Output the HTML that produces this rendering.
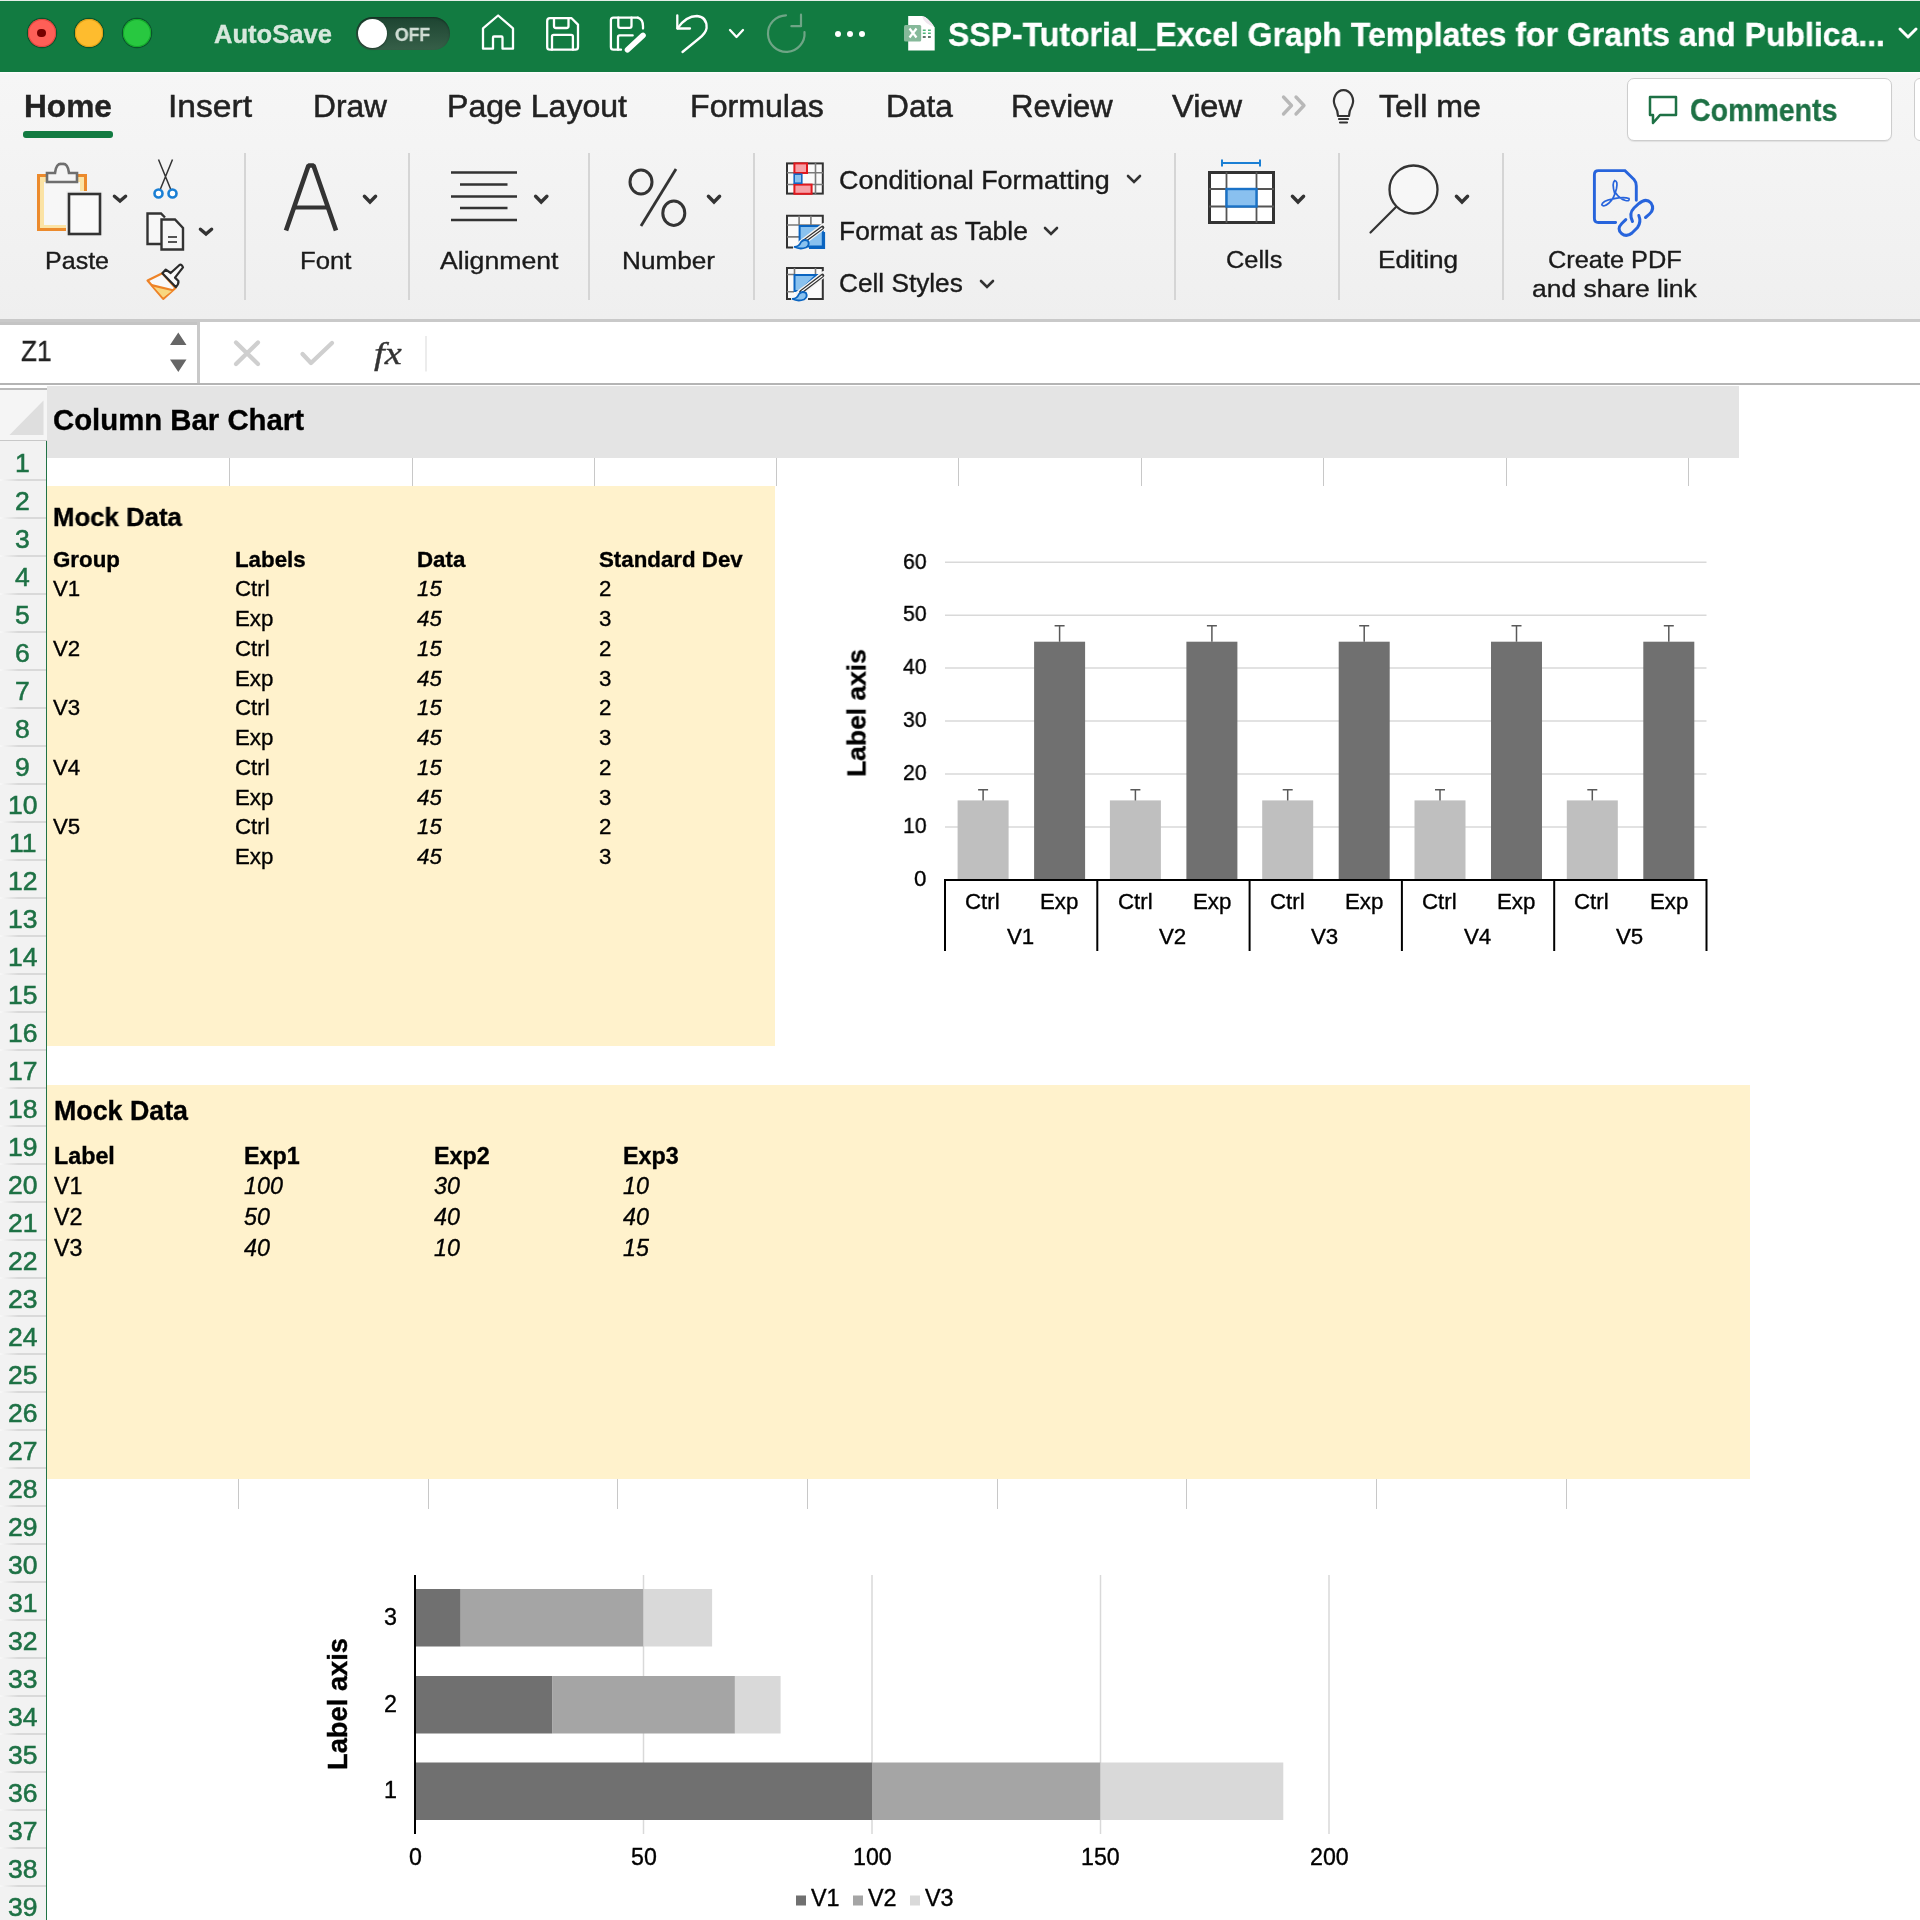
<!DOCTYPE html>
<html><head><meta charset="utf-8"><style>
html,body{margin:0;padding:0;width:1920px;height:1920px;overflow:hidden;background:#fff;}
body{position:relative;font-family:"Liberation Sans",sans-serif;-webkit-font-smoothing:antialiased;}
.t{position:absolute;white-space:nowrap;line-height:normal;transform-origin:0 0;will-change:transform;-webkit-text-stroke:0.35px currentColor;}
.r{position:absolute;}
svg.r{overflow:visible;}
</style></head><body>
<div class="r" style="left:0px;top:0px;width:1920px;height:72px;background:#127b41;"></div>
<div class="r" style="left:0px;top:0px;width:1920px;height:1px;background:#e6eee8;"></div>
<div class="r" style="left:28px;top:19.200000000000003px;width:28px;height:28px;background:#fe5f57;border-radius:50%;box-shadow:inset 0 0 0 1px #e2463f,0 0 0 1.2px rgba(0,40,20,.45);"></div>
<div class="r" style="left:75px;top:19.200000000000003px;width:28px;height:28px;background:#febc2e;border-radius:50%;box-shadow:inset 0 0 0 1px #e1a116,0 0 0 1.2px rgba(0,40,20,.45);"></div>
<div class="r" style="left:123px;top:19.200000000000003px;width:28px;height:28px;background:#28c840;border-radius:50%;box-shadow:inset 0 0 0 1px #14a82b,0 0 0 1.2px rgba(0,40,20,.45);"></div>
<div class="r" style="left:37.2px;top:28.900000000000002px;width:8.6px;height:8.6px;background:#760000;border-radius:50%;"></div>
<div class="t" style="left:214.00px;top:20.38px;font-size:25.00px;font-weight:bold;font-style:normal;color:#d7e8dd;transform:scaleX(1.0228);">AutoSave</div>
<div class="r" style="left:356px;top:17px;width:94px;height:33px;background:linear-gradient(#1d4431,#365f48);border-radius:17px;box-shadow:inset 0 1px 2px rgba(0,0,0,.35);"></div>
<div class="r" style="left:358px;top:19px;width:29px;height:29px;background:#fff;border-radius:50%;box-shadow:0 1px 2px rgba(0,0,0,.4);"></div>
<div class="t" style="left:395.00px;top:24.71px;font-size:18.00px;font-weight:bold;font-style:normal;color:#d0ddd4;transform:scaleX(0.9722);">OFF</div>
<svg class="r" style="left:0;top:0" width="1920" height="71" viewBox="0 0 1920 71" fill="none" stroke="#fff" stroke-width="2.3" stroke-linejoin="round" stroke-linecap="round">
<path d="M498.1 15.5 L483 28.4 V48.7 H493 V37.5 Q493 36.5 494 36.5 H501.5 Q502.5 36.5 502.5 37.5 V48.7 H513 V28.4 Z"/>
<path d="M550 18.2 H571.6 L578 24.6 V47 Q578 49.7 575.3 49.7 H550 Q547.2 49.7 547.2 47 V21 Q547.2 18.2 550 18.2 Z"/>
<path d="M554 18.2 V26 Q554 28 556 28 H566.5 Q568.5 28 568.5 26 V18.2"/><path d="M552 49.7 V36.5 Q552 34.8 553.7 34.8 H571.2 Q572.9 34.8 572.9 36.5 V49.7"/>
<path d="M637.8 17.6 H613.5 Q610.9 17.6 610.9 20.2 V47 Q610.9 49.7 613.5 49.7 H621"/><path d="M637.8 17.6 Q643 19 643 26.2 V28.5"/>
<path d="M618.3 17.6 V26 Q618.3 27.9 620.2 27.9 H629.6 Q631.5 27.9 631.5 26 V17.6"/><path d="M618 49.7 V37 Q618 35.4 619.6 35.4 H632.7"/>
<path d="M643 35.4 L627.5 49.8" stroke-width="5.6"/>
<path d="M677.3 15.3 V28.5 H690"/><path d="M677.5 28.3 Q686 16 697 16 Q707 17 706.6 28 Q706 33 699 38.5 L682.5 52"/>
<path d="M730 30 L736.5 37 L743 30"/>
</svg>
<svg class="r" style="left:0;top:0" width="1920" height="71"><path d="M786 15.3 A18.3 18.3 0 1 0 804.5 32" fill="none" stroke="#6fa586" stroke-width="2.2" stroke-linecap="round"/><path d="M801 14.7 V26.2 H791.4" fill="none" stroke="#6fa586" stroke-width="2.2" stroke-linecap="round" stroke-linejoin="round"/><circle cx="838" cy="34" r="3" fill="#fff"/><circle cx="850" cy="34" r="3" fill="#fff"/><circle cx="862" cy="34" r="3" fill="#fff"/><path d="M908.2 16.1 H922 Q928 17 934.7 27.6 V50.6 H908.2 Z" fill="#fff"/><path d="M922 16.1 Q924 24 934.7 27 V27.6 Q928 17 922 16.1 Z" fill="#efe6ee"/><rect x="904" y="25" width="17.2" height="16.6" rx="1.5" fill="#86b99a"/><path d="M909.5 28.5 L916.5 37.5 M916.5 28.5 L909.5 37.5" stroke="#fff" stroke-width="2.2"/><path d="M922.8 30.2 H925.7 M922.8 33.3 H925.7 M928 30.2 H930.8 M928 33.3 H930.8" stroke="#4fb57a" stroke-width="1.4"/><path d="M922.8 37 H925.7 M928 37 H930.8" stroke="#2d4a3a" stroke-width="1.4"/><path d="M1900 29 L1908 37 L1916 29" fill="none" stroke="#fff" stroke-width="3" stroke-linecap="round" stroke-linejoin="round"/></svg>
<div class="t" style="left:948.00px;top:16.13px;font-size:33.00px;font-weight:bold;font-style:normal;color:#fff;transform:scaleX(0.9689);">SSP-Tutorial_Excel Graph Templates for Grants and Publica...</div>
<div class="r" style="left:0px;top:72px;width:1920px;height:248px;background:linear-gradient(#ffffff,#f6f6f6 2px,#efefef);"></div>
<div class="r" style="left:0px;top:319px;width:1920px;height:3px;background:#c9c9c9;"></div>
<div class="t" style="left:24.00px;top:88.94px;font-size:31.00px;font-weight:bold;font-style:normal;color:#222;transform:scaleX(1.0211);">Home</div>
<div class="r" style="left:23px;top:131px;width:90px;height:7px;background:#127b41;border-radius:3px;"></div>
<div class="t" style="left:168.00px;top:88.94px;font-size:31.00px;font-weight:normal;font-style:normal;color:#222;transform:scaleX(1.0839);-webkit-text-stroke:0.5px #222;">Insert</div>
<div class="t" style="left:313.00px;top:88.94px;font-size:31.00px;font-weight:normal;font-style:normal;color:#222;transform:scaleX(1.0223);-webkit-text-stroke:0.5px #222;">Draw</div>
<div class="t" style="left:447.00px;top:88.94px;font-size:31.00px;font-weight:normal;font-style:normal;color:#222;transform:scaleX(1.0341);-webkit-text-stroke:0.5px #222;">Page Layout</div>
<div class="t" style="left:690.00px;top:88.94px;font-size:31.00px;font-weight:normal;font-style:normal;color:#222;transform:scaleX(1.0366);-webkit-text-stroke:0.5px #222;">Formulas</div>
<div class="t" style="left:886.00px;top:88.94px;font-size:31.00px;font-weight:normal;font-style:normal;color:#222;transform:scaleX(1.0219);-webkit-text-stroke:0.5px #222;">Data</div>
<div class="t" style="left:1011.00px;top:88.94px;font-size:31.00px;font-weight:normal;font-style:normal;color:#222;-webkit-text-stroke:0.5px #222;">Review</div>
<div class="t" style="left:1172.00px;top:88.94px;font-size:31.00px;font-weight:normal;font-style:normal;color:#222;transform:scaleX(1.0503);-webkit-text-stroke:0.5px #222;">View</div>
<div class="t" style="left:1379.00px;top:88.94px;font-size:31.00px;font-weight:normal;font-style:normal;color:#222;transform:scaleX(1.0380);-webkit-text-stroke:0.5px #222;">Tell me</div>
<svg class="r" style="left:0;top:71px" width="1920" height="250" viewBox="0 71 1920 250" fill="none" stroke-linecap="round" stroke-linejoin="round"><path d="M1283.5 97 L1291.5 105.5 L1283.5 114 M1296 97 L1304 105.5 L1296 114" stroke="#b8b8b8" stroke-width="3.3"/><path d="M1335 106 A9.5 11 0 1 1 1352 106 Q1349 111 1349 116 H1338 Q1338 111 1335 106 Z M1339 119 H1348 M1340 122.5 H1347" stroke="#333" stroke-width="2.2"/></svg>
<div class="r" style="left:1627px;top:78px;width:265px;height:63px;background:#fff;border:1.5px solid #cdcdcd;border-radius:7px;box-sizing:border-box;box-shadow:0 1px 1px rgba(0,0,0,.08);"></div>
<svg class="r" style="left:1645px;top:93px" width="36" height="34" fill="none" stroke="#1e7145" stroke-width="2.5" stroke-linejoin="round"><path d="M5 4 H31 V22 H15 L8 30 V22 H5 Z"/></svg>
<div class="t" style="left:1690.00px;top:92.49px;font-size:31.50px;font-weight:bold;font-style:normal;color:#1e7145;transform:scaleX(0.9057);">Comments</div>
<div class="r" style="left:1914px;top:78px;width:12px;height:63px;background:#fff;border:1.5px solid #cdcdcd;border-radius:7px;box-sizing:border-box;"></div>
<div class="r" style="left:244px;top:153px;width:2px;height:147px;background:#d5d5d5;"></div>
<div class="r" style="left:408px;top:153px;width:2px;height:147px;background:#d5d5d5;"></div>
<div class="r" style="left:588px;top:153px;width:2px;height:147px;background:#d5d5d5;"></div>
<div class="r" style="left:753px;top:153px;width:2px;height:147px;background:#d5d5d5;"></div>
<div class="r" style="left:1174px;top:153px;width:2px;height:147px;background:#d5d5d5;"></div>
<div class="r" style="left:1338px;top:153px;width:2px;height:147px;background:#d5d5d5;"></div>
<div class="r" style="left:1502px;top:153px;width:2px;height:147px;background:#d5d5d5;"></div>
<div class="t" style="left:45.40px;top:246.92px;font-size:24.40px;font-weight:normal;font-style:normal;color:#1a1a1a;transform:scaleX(1.0266);">Paste</div>
<div class="t" style="left:299.60px;top:246.92px;font-size:24.40px;font-weight:normal;font-style:normal;color:#1a1a1a;transform:scaleX(1.0533);">Font</div>
<div class="t" style="left:440.00px;top:246.92px;font-size:24.40px;font-weight:normal;font-style:normal;color:#1a1a1a;transform:scaleX(1.0917);">Alignment</div>
<div class="t" style="left:622.40px;top:246.92px;font-size:24.40px;font-weight:normal;font-style:normal;color:#1a1a1a;transform:scaleX(1.0721);">Number</div>
<div class="t" style="left:839.20px;top:166.38px;font-size:25.00px;font-weight:normal;font-style:normal;color:#1a1a1a;transform:scaleX(1.0767);">Conditional Formatting</div>
<div class="t" style="left:839.20px;top:217.38px;font-size:25.00px;font-weight:normal;font-style:normal;color:#1a1a1a;transform:scaleX(1.0562);">Format as Table</div>
<div class="t" style="left:839.20px;top:269.38px;font-size:25.00px;font-weight:normal;font-style:normal;color:#1a1a1a;transform:scaleX(1.0480);">Cell Styles</div>
<div class="t" style="left:1226.00px;top:245.92px;font-size:24.40px;font-weight:normal;font-style:normal;color:#1a1a1a;transform:scaleX(1.0389);">Cells</div>
<div class="t" style="left:1377.70px;top:245.92px;font-size:24.40px;font-weight:normal;font-style:normal;color:#1a1a1a;transform:scaleX(1.0741);">Editing</div>
<div class="t" style="left:1547.50px;top:245.92px;font-size:24.40px;font-weight:normal;font-style:normal;color:#1a1a1a;transform:scaleX(1.0386);">Create PDF</div>
<div class="t" style="left:1531.50px;top:274.62px;font-size:24.40px;font-weight:normal;font-style:normal;color:#1a1a1a;transform:scaleX(1.0854);">and share link</div>
<svg class="r" style="left:0;top:0" width="1920" height="320" viewBox="0 0 1920 320" fill="none" stroke-linejoin="miter">
<!-- paste -->
<rect x="38.5" y="175.5" width="47" height="54" fill="#fbe3a5" stroke="#ec8a2c" stroke-width="3"/>
<rect x="44" y="182" width="36" height="43" fill="#f7f7f7"/>
<path d="M47 173 H55 Q56 163 62 164 Q68 163 69 173 H77 V182 H47 Z" fill="#f4f4f4" stroke="#6e6e6e" stroke-width="2.6"/>
<rect x="67.5" y="192.5" width="34" height="43" fill="#f9f9f9" stroke="#f0f0f0" stroke-width="3"/>
<rect x="69" y="194" width="31" height="40" fill="#f9f9f9" stroke="#333" stroke-width="2.6"/>
<path d="M114.4 196.2 L120.0 201.0 L125.6 196.2" stroke="#333" stroke-width="3.4" stroke-linecap="round"/>
<!-- scissors -->
<path d="M158.5 159.5 L171 190 M172.5 159.5 L160 190" stroke="#333" stroke-width="1.5"/>
<circle cx="158.5" cy="193.5" r="4" fill="#fff" stroke="#1a7fd4" stroke-width="2.6"/>
<circle cx="172.5" cy="193.5" r="4" fill="#fff" stroke="#1a7fd4" stroke-width="2.6"/>
<!-- copy -->
<path d="M161 244 H147.5 V213.5 H161 L165 217.5" stroke="#333" stroke-width="2.4" fill="#f7f7f7"/>
<path d="M161.5 249.5 V219.5 H175 L183 228 V249.5 Z" fill="#f7f7f7" stroke="#333" stroke-width="2.4"/>
<path d="M168 237 H177 M168 242 H177" stroke="#555" stroke-width="1.8"/>
<path d="M200.4 229.2 L206.0 234.0 L211.6 229.2" stroke="#333" stroke-width="3.4" stroke-linecap="round"/>
<!-- format painter -->
<path d="M162.35 273.3 L147.6 280.5 L163.2 298.8 L175.5 288 Z" fill="#f9f9f9" stroke="#ee8327" stroke-width="2.3" stroke-linejoin="round"/>
<path d="M152.5 285.3 L172.5 290.5 L163.2 297.5 Z" fill="#f8d77f"/>
<path d="M151.5 285.1 L173 290.2" stroke="#ee8327" stroke-width="2.2"/>
<path d="M162.35 273.3 L165.8 269.6 L170.7 273 L179.5 265 Q181.5 263.5 183 267.3 L175 277.6 L178.4 281 Q179 284 175.8 287.1 Z" fill="#f9f9f9" stroke="#2b2b2b" stroke-width="2.2" stroke-linejoin="round"/>
<!-- Font A -->
<path d="M286 230.5 L308.5 165.5 H313.5 L336 230.5" stroke="#333" stroke-width="4.6" stroke-linejoin="bevel"/><path d="M294 207.5 H328" stroke="#333" stroke-width="4"/>
<path d="M364.4 196.2 L370.0 202.0 L375.6 196.2" stroke="#333" stroke-width="3.4" stroke-linecap="round"/>
<!-- Alignment -->
<path d="M451 172.5 H517 M460 184.5 H507.5 M451 196.5 H517 M460 208 H507.5 M451 220 H517" stroke="#333" stroke-width="2.6"/>
<path d="M535.6 196.2 L541.2 202.0 L546.9 196.2" stroke="#333" stroke-width="3.4" stroke-linecap="round"/>
<!-- Number % -->
<ellipse cx="641" cy="182" rx="11" ry="12" stroke="#333" stroke-width="3"/>
<ellipse cx="673.8" cy="213.2" rx="11" ry="12.2" stroke="#333" stroke-width="3"/>
<path d="M676 169 L641 226" stroke="#333" stroke-width="2.8"/>
<path d="M708.4 196.2 L714.0 202.0 L719.6 196.2" stroke="#333" stroke-width="3.4" stroke-linecap="round"/>
<!-- Conditional formatting icon -->
<rect x="787" y="163.4" width="35.8" height="30.2" fill="#fafafa" stroke="#333" stroke-width="2"/>
<path d="M787 172.8 H823 M787 184.5 H823 M815.5 163 V194" stroke="#7a7a7a" stroke-width="1.6"/>
<rect x="794.4" y="163.4" width="12.6" height="9.6" fill="#f7a0a6" stroke="#e0191f" stroke-width="2"/>
<rect x="794.4" y="184.6" width="17.2" height="9.2" fill="#f7a0a6" stroke="#e0191f" stroke-width="2"/>
<rect x="794.2" y="174.2" width="7.6" height="9" fill="#8ac2ef" stroke="#1568c4" stroke-width="1.6"/>
<path d="M1128 176 L1134 182 L1140 176" stroke="#333" stroke-width="2.6" stroke-linecap="round"/>
<!-- Format as table icon -->
<path d="M793 247.6 H787 V215.8 H822.8 V228" fill="#fafafa" stroke="#333" stroke-width="2"/>
<path d="M787 225 H799 M787 236.9 H799 M799.1 215.8 V225 M810.9 215.8 V225 M799 225 H823" stroke="#7a7a7a" stroke-width="1.6"/>
<path d="M799.6 226 H822.8 V246.6 H799.6 Z" fill="#8ac2ef" stroke="#0a64c0" stroke-width="2"/>
<path d="M809 247.6 H823.8 V232" stroke="#0a64c0" stroke-width="2.6"/>
<path d="M823.5 226.5 L801 243.5" stroke="#f2f2f2" stroke-width="6.5" stroke-linecap="round"/>
<path d="M822.5 227.5 L803 242" stroke="#333" stroke-width="3.6" stroke-linecap="round"/>
<path d="M822 228 L803.5 241.5" stroke="#fff" stroke-width="1.2" stroke-linecap="round"/>
<path d="M794 246.8 Q799 247 801 242 Q804 238.5 808 241 Q810 245 806 247.5 Q800 249.8 794 246.8 Z" fill="#8ac2ef" stroke="#0a64c0" stroke-width="1.8"/>
<path d="M1045 228 L1051 234 L1057 228" stroke="#333" stroke-width="2.6" stroke-linecap="round"/>
<!-- Cell styles icon -->
<path d="M791 299.1 H787 V268 H822.8 V299.1 H808" fill="#fafafa" stroke="#333" stroke-width="2"/>
<path d="M787 274.5 H794 M787 291.7 H794 M794.5 268 V274 M815.5 268 V274" stroke="#7a7a7a" stroke-width="1.6"/>
<path d="M794.5 275 H816.5 L800 291 H794.5 Z" fill="#8ac2ef" stroke="#0a64c0" stroke-width="2"/>
<path d="M823.5 274.5 L799 293.5" stroke="#f2f2f2" stroke-width="6.5" stroke-linecap="round"/>
<path d="M822.5 275.5 L801 292" stroke="#333" stroke-width="3.6" stroke-linecap="round"/>
<path d="M822 276 L801.5 291.5" stroke="#fff" stroke-width="1.2" stroke-linecap="round"/>
<path d="M792 298.8 Q797 299 799 294 Q802 290.5 806 293 Q808 297 804 299.5 Q798 301.8 792 298.8 Z" fill="#8ac2ef" stroke="#0a64c0" stroke-width="1.8"/>
<path d="M981 281 L987 287 L993 281" stroke="#333" stroke-width="2.6" stroke-linecap="round"/>
<!-- Cells icon -->
<path d="M1222 163 H1260 M1222 159.5 V166.5 M1260 159.5 V166.5" stroke="#1a7fd4" stroke-width="2"/>
<rect x="1209.5" y="172.5" width="64" height="50" fill="#fff" stroke="#333" stroke-width="3"/>
<path d="M1226.5 172 V223 M1256.5 172 V223 M1209 189 H1274 M1209 206.5 H1274" stroke="#555" stroke-width="1.8"/>
<rect x="1226.5" y="189" width="30" height="17.5" fill="#89c0ef" stroke="#1a72c7" stroke-width="2.4"/>
<path d="M1292.4 196.2 L1298.0 202.0 L1303.6 196.2" stroke="#333" stroke-width="3.4" stroke-linecap="round"/>
<!-- Editing magnifier -->
<circle cx="1413.5" cy="189.5" r="24" fill="#f7f7f7" stroke="#333" stroke-width="2.3"/>
<path d="M1396 207 L1370.5 232.5" stroke="#333" stroke-width="2.2" stroke-linecap="round"/>
<path d="M1456.4 196.2 L1462.0 202.0 L1467.6 196.2" stroke="#333" stroke-width="3.4" stroke-linecap="round"/>
<!-- PDF -->
<path d="M1615.6 222.5 H1598.4 Q1594.4 222.5 1594.4 218.5 V174.6 Q1594.4 170.6 1598.4 170.6 H1625 L1634 179.5 Q1636.3 182 1636.3 186 V200.2" stroke="#2764dc" stroke-width="2.9" stroke-linecap="round"/>
<path d="M1614.8 194 Q1611.5 183 1614.8 180.5 Q1618 181 1616.5 188.5 Q1614 199 1609 203 Q1603.5 207.5 1601.8 204.8 Q1602 201 1613 198.8 Q1624 196.8 1629 198.5 Q1630 201.5 1625.5 200.5 Q1619.5 199 1615 192" stroke="#2764dc" stroke-width="1.7"/>
<path d="M1632.5 221.5 Q1628.5 213.5 1634 208 L1639 203.5 Q1646 197.5 1651 203 Q1655 209 1649.5 214 L1645.5 217.5" stroke="#2764dc" stroke-width="3" stroke-linecap="round"/>
<path d="M1625.8 219.6 L1621.8 223.5 Q1616.5 229 1621.5 233.5 Q1626.5 237.5 1632 233 L1637.5 227.5 Q1641.5 222 1638.8 215.5" stroke="#2764dc" stroke-width="3" stroke-linecap="round"/>
</svg>
<div class="r" style="left:0px;top:322px;width:1920px;height:61px;background:#fff;"></div>
<div class="r" style="left:0px;top:322px;width:197px;height:3px;background:#c4c4c4;"></div>
<div class="r" style="left:197px;top:322px;width:3px;height:62px;background:#c9c9c9;"></div>
<div class="r" style="left:0px;top:383px;width:1920px;height:2px;background:#b4b4b4;"></div>
<div class="t" style="left:21.00px;top:334.75px;font-size:29.00px;font-weight:normal;font-style:normal;color:#222;transform:scaleX(0.9028);">Z1</div>
<svg class="r" style="left:0;top:322px" width="460" height="62" viewBox="0 322 460 62"><path d="M170 345 L178.3 332.5 L186.5 345 Z M170 359.5 L178.3 372 L186.5 359.5 Z" fill="#666"/><path d="M236 342.5 L258 364 M258 342.5 L236 364" stroke="#cfcfcf" stroke-width="4.3" stroke-linecap="round"/><path d="M302.5 354 L311 363 L332 343" fill="none" stroke="#cfcfcf" stroke-width="4.3" stroke-linecap="round" stroke-linejoin="round"/><path d="M426 336 V371.5" stroke="#e6e6e6" stroke-width="1.5"/></svg>
<div class="t" style="left:374.00px;top:335.04px;font-size:32.00px;font-weight:normal;font-style:italic;color:#333;transform:scaleX(1.1960);font-family:'Liberation Serif',serif;">fx</div>
<div class="r" style="left:0px;top:385px;width:1920px;height:1535px;background:#fff;"></div>
<div class="r" style="left:0px;top:388px;width:47px;height:1.5px;background:#b9b9b9;"></div>
<div class="r" style="left:0px;top:389.5px;width:47px;height:51px;background:#f5f5f5;"></div>
<svg class="r" style="left:0;top:388px" width="47" height="53"><path d="M9.5 47 L43.5 12.5 V47 Z" fill="#dedede"/></svg>
<div class="r" style="left:0px;top:440px;width:47px;height:1.5px;background:#c8c8c8;"></div>
<div class="r" style="left:0px;top:441px;width:46px;height:1479px;background:#f2f2f2;"></div>
<div class="r" style="left:0px;top:479px;width:46px;height:1.6px;background:linear-gradient(90deg,#f8f8f8,#d9d9d9 40%,#d9d9d9);"></div>
<div class="t" style="left:15.15px;top:447.52px;font-size:26.50px;font-weight:normal;font-style:normal;color:#1e7145;-webkit-text-stroke:0.55px #1e7145;">1</div>
<div class="r" style="left:0px;top:517px;width:46px;height:1.6px;background:linear-gradient(90deg,#f8f8f8,#d9d9d9 40%,#d9d9d9);"></div>
<div class="t" style="left:15.15px;top:485.52px;font-size:26.50px;font-weight:normal;font-style:normal;color:#1e7145;-webkit-text-stroke:0.55px #1e7145;">2</div>
<div class="r" style="left:0px;top:555px;width:46px;height:1.6px;background:linear-gradient(90deg,#f8f8f8,#d9d9d9 40%,#d9d9d9);"></div>
<div class="t" style="left:15.15px;top:523.52px;font-size:26.50px;font-weight:normal;font-style:normal;color:#1e7145;-webkit-text-stroke:0.55px #1e7145;">3</div>
<div class="r" style="left:0px;top:593px;width:46px;height:1.6px;background:linear-gradient(90deg,#f8f8f8,#d9d9d9 40%,#d9d9d9);"></div>
<div class="t" style="left:15.15px;top:561.52px;font-size:26.50px;font-weight:normal;font-style:normal;color:#1e7145;-webkit-text-stroke:0.55px #1e7145;">4</div>
<div class="r" style="left:0px;top:631px;width:46px;height:1.6px;background:linear-gradient(90deg,#f8f8f8,#d9d9d9 40%,#d9d9d9);"></div>
<div class="t" style="left:15.15px;top:599.52px;font-size:26.50px;font-weight:normal;font-style:normal;color:#1e7145;-webkit-text-stroke:0.55px #1e7145;">5</div>
<div class="r" style="left:0px;top:669px;width:46px;height:1.6px;background:linear-gradient(90deg,#f8f8f8,#d9d9d9 40%,#d9d9d9);"></div>
<div class="t" style="left:15.15px;top:637.52px;font-size:26.50px;font-weight:normal;font-style:normal;color:#1e7145;-webkit-text-stroke:0.55px #1e7145;">6</div>
<div class="r" style="left:0px;top:707px;width:46px;height:1.6px;background:linear-gradient(90deg,#f8f8f8,#d9d9d9 40%,#d9d9d9);"></div>
<div class="t" style="left:15.15px;top:675.52px;font-size:26.50px;font-weight:normal;font-style:normal;color:#1e7145;-webkit-text-stroke:0.55px #1e7145;">7</div>
<div class="r" style="left:0px;top:745px;width:46px;height:1.6px;background:linear-gradient(90deg,#f8f8f8,#d9d9d9 40%,#d9d9d9);"></div>
<div class="t" style="left:15.15px;top:713.52px;font-size:26.50px;font-weight:normal;font-style:normal;color:#1e7145;-webkit-text-stroke:0.55px #1e7145;">8</div>
<div class="r" style="left:0px;top:783px;width:46px;height:1.6px;background:linear-gradient(90deg,#f8f8f8,#d9d9d9 40%,#d9d9d9);"></div>
<div class="t" style="left:15.15px;top:751.52px;font-size:26.50px;font-weight:normal;font-style:normal;color:#1e7145;-webkit-text-stroke:0.55px #1e7145;">9</div>
<div class="r" style="left:0px;top:821px;width:46px;height:1.6px;background:linear-gradient(90deg,#f8f8f8,#d9d9d9 40%,#d9d9d9);"></div>
<div class="t" style="left:7.79px;top:789.52px;font-size:26.50px;font-weight:normal;font-style:normal;color:#1e7145;-webkit-text-stroke:0.55px #1e7145;">10</div>
<div class="r" style="left:0px;top:859px;width:46px;height:1.6px;background:linear-gradient(90deg,#f8f8f8,#d9d9d9 40%,#d9d9d9);"></div>
<div class="t" style="left:8.72px;top:827.52px;font-size:26.50px;font-weight:normal;font-style:normal;color:#1e7145;-webkit-text-stroke:0.55px #1e7145;">11</div>
<div class="r" style="left:0px;top:897px;width:46px;height:1.6px;background:linear-gradient(90deg,#f8f8f8,#d9d9d9 40%,#d9d9d9);"></div>
<div class="t" style="left:7.79px;top:865.52px;font-size:26.50px;font-weight:normal;font-style:normal;color:#1e7145;-webkit-text-stroke:0.55px #1e7145;">12</div>
<div class="r" style="left:0px;top:935px;width:46px;height:1.6px;background:linear-gradient(90deg,#f8f8f8,#d9d9d9 40%,#d9d9d9);"></div>
<div class="t" style="left:7.79px;top:903.52px;font-size:26.50px;font-weight:normal;font-style:normal;color:#1e7145;-webkit-text-stroke:0.55px #1e7145;">13</div>
<div class="r" style="left:0px;top:973px;width:46px;height:1.6px;background:linear-gradient(90deg,#f8f8f8,#d9d9d9 40%,#d9d9d9);"></div>
<div class="t" style="left:7.79px;top:941.52px;font-size:26.50px;font-weight:normal;font-style:normal;color:#1e7145;-webkit-text-stroke:0.55px #1e7145;">14</div>
<div class="r" style="left:0px;top:1011px;width:46px;height:1.6px;background:linear-gradient(90deg,#f8f8f8,#d9d9d9 40%,#d9d9d9);"></div>
<div class="t" style="left:7.79px;top:979.52px;font-size:26.50px;font-weight:normal;font-style:normal;color:#1e7145;-webkit-text-stroke:0.55px #1e7145;">15</div>
<div class="r" style="left:0px;top:1049px;width:46px;height:1.6px;background:linear-gradient(90deg,#f8f8f8,#d9d9d9 40%,#d9d9d9);"></div>
<div class="t" style="left:7.79px;top:1017.52px;font-size:26.50px;font-weight:normal;font-style:normal;color:#1e7145;-webkit-text-stroke:0.55px #1e7145;">16</div>
<div class="r" style="left:0px;top:1087px;width:46px;height:1.6px;background:linear-gradient(90deg,#f8f8f8,#d9d9d9 40%,#d9d9d9);"></div>
<div class="t" style="left:7.79px;top:1055.52px;font-size:26.50px;font-weight:normal;font-style:normal;color:#1e7145;-webkit-text-stroke:0.55px #1e7145;">17</div>
<div class="r" style="left:0px;top:1125px;width:46px;height:1.6px;background:linear-gradient(90deg,#f8f8f8,#d9d9d9 40%,#d9d9d9);"></div>
<div class="t" style="left:7.79px;top:1093.52px;font-size:26.50px;font-weight:normal;font-style:normal;color:#1e7145;-webkit-text-stroke:0.55px #1e7145;">18</div>
<div class="r" style="left:0px;top:1163px;width:46px;height:1.6px;background:linear-gradient(90deg,#f8f8f8,#d9d9d9 40%,#d9d9d9);"></div>
<div class="t" style="left:7.79px;top:1131.52px;font-size:26.50px;font-weight:normal;font-style:normal;color:#1e7145;-webkit-text-stroke:0.55px #1e7145;">19</div>
<div class="r" style="left:0px;top:1201px;width:46px;height:1.6px;background:linear-gradient(90deg,#f8f8f8,#d9d9d9 40%,#d9d9d9);"></div>
<div class="t" style="left:7.79px;top:1169.52px;font-size:26.50px;font-weight:normal;font-style:normal;color:#1e7145;-webkit-text-stroke:0.55px #1e7145;">20</div>
<div class="r" style="left:0px;top:1239px;width:46px;height:1.6px;background:linear-gradient(90deg,#f8f8f8,#d9d9d9 40%,#d9d9d9);"></div>
<div class="t" style="left:7.79px;top:1207.52px;font-size:26.50px;font-weight:normal;font-style:normal;color:#1e7145;-webkit-text-stroke:0.55px #1e7145;">21</div>
<div class="r" style="left:0px;top:1277px;width:46px;height:1.6px;background:linear-gradient(90deg,#f8f8f8,#d9d9d9 40%,#d9d9d9);"></div>
<div class="t" style="left:7.79px;top:1245.52px;font-size:26.50px;font-weight:normal;font-style:normal;color:#1e7145;-webkit-text-stroke:0.55px #1e7145;">22</div>
<div class="r" style="left:0px;top:1315px;width:46px;height:1.6px;background:linear-gradient(90deg,#f8f8f8,#d9d9d9 40%,#d9d9d9);"></div>
<div class="t" style="left:7.79px;top:1283.52px;font-size:26.50px;font-weight:normal;font-style:normal;color:#1e7145;-webkit-text-stroke:0.55px #1e7145;">23</div>
<div class="r" style="left:0px;top:1353px;width:46px;height:1.6px;background:linear-gradient(90deg,#f8f8f8,#d9d9d9 40%,#d9d9d9);"></div>
<div class="t" style="left:7.79px;top:1321.52px;font-size:26.50px;font-weight:normal;font-style:normal;color:#1e7145;-webkit-text-stroke:0.55px #1e7145;">24</div>
<div class="r" style="left:0px;top:1391px;width:46px;height:1.6px;background:linear-gradient(90deg,#f8f8f8,#d9d9d9 40%,#d9d9d9);"></div>
<div class="t" style="left:7.79px;top:1359.52px;font-size:26.50px;font-weight:normal;font-style:normal;color:#1e7145;-webkit-text-stroke:0.55px #1e7145;">25</div>
<div class="r" style="left:0px;top:1429px;width:46px;height:1.6px;background:linear-gradient(90deg,#f8f8f8,#d9d9d9 40%,#d9d9d9);"></div>
<div class="t" style="left:7.79px;top:1397.52px;font-size:26.50px;font-weight:normal;font-style:normal;color:#1e7145;-webkit-text-stroke:0.55px #1e7145;">26</div>
<div class="r" style="left:0px;top:1467px;width:46px;height:1.6px;background:linear-gradient(90deg,#f8f8f8,#d9d9d9 40%,#d9d9d9);"></div>
<div class="t" style="left:7.79px;top:1435.52px;font-size:26.50px;font-weight:normal;font-style:normal;color:#1e7145;-webkit-text-stroke:0.55px #1e7145;">27</div>
<div class="r" style="left:0px;top:1505px;width:46px;height:1.6px;background:linear-gradient(90deg,#f8f8f8,#d9d9d9 40%,#d9d9d9);"></div>
<div class="t" style="left:7.79px;top:1473.52px;font-size:26.50px;font-weight:normal;font-style:normal;color:#1e7145;-webkit-text-stroke:0.55px #1e7145;">28</div>
<div class="r" style="left:0px;top:1543px;width:46px;height:1.6px;background:linear-gradient(90deg,#f8f8f8,#d9d9d9 40%,#d9d9d9);"></div>
<div class="t" style="left:7.79px;top:1511.52px;font-size:26.50px;font-weight:normal;font-style:normal;color:#1e7145;-webkit-text-stroke:0.55px #1e7145;">29</div>
<div class="r" style="left:0px;top:1581px;width:46px;height:1.6px;background:linear-gradient(90deg,#f8f8f8,#d9d9d9 40%,#d9d9d9);"></div>
<div class="t" style="left:7.79px;top:1549.52px;font-size:26.50px;font-weight:normal;font-style:normal;color:#1e7145;-webkit-text-stroke:0.55px #1e7145;">30</div>
<div class="r" style="left:0px;top:1619px;width:46px;height:1.6px;background:linear-gradient(90deg,#f8f8f8,#d9d9d9 40%,#d9d9d9);"></div>
<div class="t" style="left:7.79px;top:1587.52px;font-size:26.50px;font-weight:normal;font-style:normal;color:#1e7145;-webkit-text-stroke:0.55px #1e7145;">31</div>
<div class="r" style="left:0px;top:1657px;width:46px;height:1.6px;background:linear-gradient(90deg,#f8f8f8,#d9d9d9 40%,#d9d9d9);"></div>
<div class="t" style="left:7.79px;top:1625.52px;font-size:26.50px;font-weight:normal;font-style:normal;color:#1e7145;-webkit-text-stroke:0.55px #1e7145;">32</div>
<div class="r" style="left:0px;top:1695px;width:46px;height:1.6px;background:linear-gradient(90deg,#f8f8f8,#d9d9d9 40%,#d9d9d9);"></div>
<div class="t" style="left:7.79px;top:1663.52px;font-size:26.50px;font-weight:normal;font-style:normal;color:#1e7145;-webkit-text-stroke:0.55px #1e7145;">33</div>
<div class="r" style="left:0px;top:1733px;width:46px;height:1.6px;background:linear-gradient(90deg,#f8f8f8,#d9d9d9 40%,#d9d9d9);"></div>
<div class="t" style="left:7.79px;top:1701.52px;font-size:26.50px;font-weight:normal;font-style:normal;color:#1e7145;-webkit-text-stroke:0.55px #1e7145;">34</div>
<div class="r" style="left:0px;top:1771px;width:46px;height:1.6px;background:linear-gradient(90deg,#f8f8f8,#d9d9d9 40%,#d9d9d9);"></div>
<div class="t" style="left:7.79px;top:1739.52px;font-size:26.50px;font-weight:normal;font-style:normal;color:#1e7145;-webkit-text-stroke:0.55px #1e7145;">35</div>
<div class="r" style="left:0px;top:1809px;width:46px;height:1.6px;background:linear-gradient(90deg,#f8f8f8,#d9d9d9 40%,#d9d9d9);"></div>
<div class="t" style="left:7.79px;top:1777.52px;font-size:26.50px;font-weight:normal;font-style:normal;color:#1e7145;-webkit-text-stroke:0.55px #1e7145;">36</div>
<div class="r" style="left:0px;top:1847px;width:46px;height:1.6px;background:linear-gradient(90deg,#f8f8f8,#d9d9d9 40%,#d9d9d9);"></div>
<div class="t" style="left:7.79px;top:1815.52px;font-size:26.50px;font-weight:normal;font-style:normal;color:#1e7145;-webkit-text-stroke:0.55px #1e7145;">37</div>
<div class="r" style="left:0px;top:1885px;width:46px;height:1.6px;background:linear-gradient(90deg,#f8f8f8,#d9d9d9 40%,#d9d9d9);"></div>
<div class="t" style="left:7.79px;top:1853.52px;font-size:26.50px;font-weight:normal;font-style:normal;color:#1e7145;-webkit-text-stroke:0.55px #1e7145;">38</div>
<div class="r" style="left:0px;top:1923px;width:46px;height:1.6px;background:linear-gradient(90deg,#f8f8f8,#d9d9d9 40%,#d9d9d9);"></div>
<div class="t" style="left:7.79px;top:1891.52px;font-size:26.50px;font-weight:normal;font-style:normal;color:#1e7145;-webkit-text-stroke:0.55px #1e7145;">39</div>
<div class="r" style="left:47px;top:386px;width:1692px;height:72px;background:#e4e4e4;"></div>
<div class="t" style="left:52.50px;top:404.25px;font-size:29.00px;font-weight:bold;font-style:normal;color:#000;transform:scaleX(1.0117);">Column Bar Chart</div>
<div class="r" style="left:229px;top:458px;width:1px;height:28px;background:#c8c8c8;"></div>
<div class="r" style="left:412px;top:458px;width:1px;height:28px;background:#c8c8c8;"></div>
<div class="r" style="left:594px;top:458px;width:1px;height:28px;background:#c8c8c8;"></div>
<div class="r" style="left:776px;top:458px;width:1px;height:28px;background:#c8c8c8;"></div>
<div class="r" style="left:958px;top:458px;width:1px;height:28px;background:#c8c8c8;"></div>
<div class="r" style="left:1141px;top:458px;width:1px;height:28px;background:#c8c8c8;"></div>
<div class="r" style="left:1323px;top:458px;width:1px;height:28px;background:#c8c8c8;"></div>
<div class="r" style="left:1506px;top:458px;width:1px;height:28px;background:#c8c8c8;"></div>
<div class="r" style="left:1688px;top:458px;width:1px;height:28px;background:#c8c8c8;"></div>
<div class="r" style="left:47px;top:486px;width:728px;height:560px;background:#fff2cc;"></div>
<div class="t" style="left:52.50px;top:501.67px;font-size:26.00px;font-weight:bold;font-style:normal;color:#000;transform:scaleX(0.9903);">Mock Data</div>
<div class="t" style="left:52.50px;top:546.82px;font-size:22.30px;font-weight:bold;font-style:normal;color:#000;">Group</div>
<div class="t" style="left:234.50px;top:546.82px;font-size:22.30px;font-weight:bold;font-style:normal;color:#000;">Labels</div>
<div class="t" style="left:417.00px;top:546.82px;font-size:22.30px;font-weight:bold;font-style:normal;color:#000;">Data</div>
<div class="t" style="left:598.50px;top:546.82px;font-size:22.30px;font-weight:bold;font-style:normal;color:#000;">Standard Dev</div>
<div class="t" style="left:52.50px;top:576.42px;font-size:22.30px;font-weight:normal;font-style:normal;color:#000;">V1</div>
<div class="t" style="left:234.50px;top:576.42px;font-size:22.30px;font-weight:normal;font-style:normal;color:#000;">Ctrl</div>
<div class="t" style="left:417.00px;top:576.42px;font-size:22.30px;font-weight:normal;font-style:italic;color:#000;">15</div>
<div class="t" style="left:598.50px;top:576.42px;font-size:22.30px;font-weight:normal;font-style:normal;color:#000;">2</div>
<div class="t" style="left:234.50px;top:606.17px;font-size:22.30px;font-weight:normal;font-style:normal;color:#000;">Exp</div>
<div class="t" style="left:417.00px;top:606.17px;font-size:22.30px;font-weight:normal;font-style:italic;color:#000;">45</div>
<div class="t" style="left:598.50px;top:606.17px;font-size:22.30px;font-weight:normal;font-style:normal;color:#000;">3</div>
<div class="t" style="left:52.50px;top:635.92px;font-size:22.30px;font-weight:normal;font-style:normal;color:#000;">V2</div>
<div class="t" style="left:234.50px;top:635.92px;font-size:22.30px;font-weight:normal;font-style:normal;color:#000;">Ctrl</div>
<div class="t" style="left:417.00px;top:635.92px;font-size:22.30px;font-weight:normal;font-style:italic;color:#000;">15</div>
<div class="t" style="left:598.50px;top:635.92px;font-size:22.30px;font-weight:normal;font-style:normal;color:#000;">2</div>
<div class="t" style="left:234.50px;top:665.67px;font-size:22.30px;font-weight:normal;font-style:normal;color:#000;">Exp</div>
<div class="t" style="left:417.00px;top:665.67px;font-size:22.30px;font-weight:normal;font-style:italic;color:#000;">45</div>
<div class="t" style="left:598.50px;top:665.67px;font-size:22.30px;font-weight:normal;font-style:normal;color:#000;">3</div>
<div class="t" style="left:52.50px;top:695.42px;font-size:22.30px;font-weight:normal;font-style:normal;color:#000;">V3</div>
<div class="t" style="left:234.50px;top:695.42px;font-size:22.30px;font-weight:normal;font-style:normal;color:#000;">Ctrl</div>
<div class="t" style="left:417.00px;top:695.42px;font-size:22.30px;font-weight:normal;font-style:italic;color:#000;">15</div>
<div class="t" style="left:598.50px;top:695.42px;font-size:22.30px;font-weight:normal;font-style:normal;color:#000;">2</div>
<div class="t" style="left:234.50px;top:725.17px;font-size:22.30px;font-weight:normal;font-style:normal;color:#000;">Exp</div>
<div class="t" style="left:417.00px;top:725.17px;font-size:22.30px;font-weight:normal;font-style:italic;color:#000;">45</div>
<div class="t" style="left:598.50px;top:725.17px;font-size:22.30px;font-weight:normal;font-style:normal;color:#000;">3</div>
<div class="t" style="left:52.50px;top:754.92px;font-size:22.30px;font-weight:normal;font-style:normal;color:#000;">V4</div>
<div class="t" style="left:234.50px;top:754.92px;font-size:22.30px;font-weight:normal;font-style:normal;color:#000;">Ctrl</div>
<div class="t" style="left:417.00px;top:754.92px;font-size:22.30px;font-weight:normal;font-style:italic;color:#000;">15</div>
<div class="t" style="left:598.50px;top:754.92px;font-size:22.30px;font-weight:normal;font-style:normal;color:#000;">2</div>
<div class="t" style="left:234.50px;top:784.67px;font-size:22.30px;font-weight:normal;font-style:normal;color:#000;">Exp</div>
<div class="t" style="left:417.00px;top:784.67px;font-size:22.30px;font-weight:normal;font-style:italic;color:#000;">45</div>
<div class="t" style="left:598.50px;top:784.67px;font-size:22.30px;font-weight:normal;font-style:normal;color:#000;">3</div>
<div class="t" style="left:52.50px;top:814.42px;font-size:22.30px;font-weight:normal;font-style:normal;color:#000;">V5</div>
<div class="t" style="left:234.50px;top:814.42px;font-size:22.30px;font-weight:normal;font-style:normal;color:#000;">Ctrl</div>
<div class="t" style="left:417.00px;top:814.42px;font-size:22.30px;font-weight:normal;font-style:italic;color:#000;">15</div>
<div class="t" style="left:598.50px;top:814.42px;font-size:22.30px;font-weight:normal;font-style:normal;color:#000;">2</div>
<div class="t" style="left:234.50px;top:844.17px;font-size:22.30px;font-weight:normal;font-style:normal;color:#000;">Exp</div>
<div class="t" style="left:417.00px;top:844.17px;font-size:22.30px;font-weight:normal;font-style:italic;color:#000;">45</div>
<div class="t" style="left:598.50px;top:844.17px;font-size:22.30px;font-weight:normal;font-style:normal;color:#000;">3</div>
<div class="r" style="left:47px;top:1085px;width:1703px;height:394px;background:#fff2cc;"></div>
<div class="t" style="left:54.00px;top:1095.55px;font-size:26.80px;font-weight:bold;font-style:normal;color:#000;">Mock Data</div>
<div class="t" style="left:54.00px;top:1142.51px;font-size:23.30px;font-weight:bold;font-style:normal;color:#000;">Label</div>
<div class="t" style="left:243.50px;top:1142.51px;font-size:23.30px;font-weight:bold;font-style:normal;color:#000;">Exp1</div>
<div class="t" style="left:433.50px;top:1142.51px;font-size:23.30px;font-weight:bold;font-style:normal;color:#000;">Exp2</div>
<div class="t" style="left:623.00px;top:1142.51px;font-size:23.30px;font-weight:bold;font-style:normal;color:#000;">Exp3</div>
<div class="t" style="left:54.00px;top:1172.91px;font-size:23.30px;font-weight:normal;font-style:normal;color:#000;">V1</div>
<div class="t" style="left:243.50px;top:1172.91px;font-size:23.30px;font-weight:normal;font-style:italic;color:#000;">100</div>
<div class="t" style="left:433.50px;top:1172.91px;font-size:23.30px;font-weight:normal;font-style:italic;color:#000;">30</div>
<div class="t" style="left:623.00px;top:1172.91px;font-size:23.30px;font-weight:normal;font-style:italic;color:#000;">10</div>
<div class="t" style="left:54.00px;top:1203.81px;font-size:23.30px;font-weight:normal;font-style:normal;color:#000;">V2</div>
<div class="t" style="left:243.50px;top:1203.81px;font-size:23.30px;font-weight:normal;font-style:italic;color:#000;">50</div>
<div class="t" style="left:433.50px;top:1203.81px;font-size:23.30px;font-weight:normal;font-style:italic;color:#000;">40</div>
<div class="t" style="left:623.00px;top:1203.81px;font-size:23.30px;font-weight:normal;font-style:italic;color:#000;">40</div>
<div class="t" style="left:54.00px;top:1234.71px;font-size:23.30px;font-weight:normal;font-style:normal;color:#000;">V3</div>
<div class="t" style="left:243.50px;top:1234.71px;font-size:23.30px;font-weight:normal;font-style:italic;color:#000;">40</div>
<div class="t" style="left:433.50px;top:1234.71px;font-size:23.30px;font-weight:normal;font-style:italic;color:#000;">10</div>
<div class="t" style="left:623.00px;top:1234.71px;font-size:23.30px;font-weight:normal;font-style:italic;color:#000;">15</div>
<div class="r" style="left:238px;top:1479px;width:1px;height:30px;background:#c8c8c8;"></div>
<div class="r" style="left:428px;top:1479px;width:1px;height:30px;background:#c8c8c8;"></div>
<div class="r" style="left:617px;top:1479px;width:1px;height:30px;background:#c8c8c8;"></div>
<div class="r" style="left:807px;top:1479px;width:1px;height:30px;background:#c8c8c8;"></div>
<div class="r" style="left:997px;top:1479px;width:1px;height:30px;background:#c8c8c8;"></div>
<div class="r" style="left:1186px;top:1479px;width:1px;height:30px;background:#c8c8c8;"></div>
<div class="r" style="left:1376px;top:1479px;width:1px;height:30px;background:#c8c8c8;"></div>
<div class="r" style="left:1566px;top:1479px;width:1px;height:30px;background:#c8c8c8;"></div>
<div class="r" style="left:45.8px;top:441px;width:1.3px;height:1479px;background:#217346;"></div>
<svg class="r" style="left:0;top:0" width="1920" height="1920" fill="none"><path d="M945 826.9 H1706.5" stroke="#d9d9d9" stroke-width="1.5"/><path d="M945 774.0 H1706.5" stroke="#d9d9d9" stroke-width="1.5"/><path d="M945 721.0 H1706.5" stroke="#d9d9d9" stroke-width="1.5"/><path d="M945 668.1 H1706.5" stroke="#d9d9d9" stroke-width="1.5"/><path d="M945 615.2 H1706.5" stroke="#d9d9d9" stroke-width="1.5"/><path d="M945 562.3 H1706.5" stroke="#d9d9d9" stroke-width="1.5"/><rect x="957.6" y="800.4" width="51" height="79.4" fill="#bfbfbf"/><path d="M983.1 800.4 V789.8 M978.1 789.8 H988.1" stroke="#595959" stroke-width="1.5"/><rect x="1034.1" y="641.7" width="51" height="238.1" fill="#707070"/><path d="M1059.6 641.7 V625.8 M1054.6 625.8 H1064.6" stroke="#595959" stroke-width="1.5"/><rect x="1109.9" y="800.4" width="51" height="79.4" fill="#bfbfbf"/><path d="M1135.4 800.4 V789.8 M1130.4 789.8 H1140.4" stroke="#595959" stroke-width="1.5"/><rect x="1186.4" y="641.7" width="51" height="238.1" fill="#707070"/><path d="M1211.9 641.7 V625.8 M1206.9 625.8 H1216.9" stroke="#595959" stroke-width="1.5"/><rect x="1262.2" y="800.4" width="51" height="79.4" fill="#bfbfbf"/><path d="M1287.7 800.4 V789.8 M1282.7 789.8 H1292.7" stroke="#595959" stroke-width="1.5"/><rect x="1338.7" y="641.7" width="51" height="238.1" fill="#707070"/><path d="M1364.2 641.7 V625.8 M1359.2 625.8 H1369.2" stroke="#595959" stroke-width="1.5"/><rect x="1414.5" y="800.4" width="51" height="79.4" fill="#bfbfbf"/><path d="M1440.0 800.4 V789.8 M1435.0 789.8 H1445.0" stroke="#595959" stroke-width="1.5"/><rect x="1491.0" y="641.7" width="51" height="238.1" fill="#707070"/><path d="M1516.5 641.7 V625.8 M1511.5 625.8 H1521.5" stroke="#595959" stroke-width="1.5"/><rect x="1566.8" y="800.4" width="51" height="79.4" fill="#bfbfbf"/><path d="M1592.3 800.4 V789.8 M1587.3 789.8 H1597.3" stroke="#595959" stroke-width="1.5"/><rect x="1643.3" y="641.7" width="51" height="238.1" fill="#707070"/><path d="M1668.8 641.7 V625.8 M1663.8 625.8 H1673.8" stroke="#595959" stroke-width="1.5"/><path d="M945 880 H1706.5" stroke="#000" stroke-width="2"/><path d="M945.0 879 V951" stroke="#000" stroke-width="2"/><path d="M1097.3 879 V951" stroke="#000" stroke-width="2"/><path d="M1249.6 879 V951" stroke="#000" stroke-width="2"/><path d="M1401.9 879 V951" stroke="#000" stroke-width="2"/><path d="M1554.2 879 V951" stroke="#000" stroke-width="2"/><path d="M1706.5 879 V951" stroke="#000" stroke-width="2"/></svg>
<div class="t" style="left:914.12px;top:866.02px;font-size:22.30px;font-weight:normal;font-style:normal;color:#000;">0</div>
<div class="t" style="left:903.00px;top:813.10px;font-size:22.30px;font-weight:normal;font-style:normal;color:#000;transform:scaleX(0.9494);">10</div>
<div class="t" style="left:903.00px;top:760.18px;font-size:22.30px;font-weight:normal;font-style:normal;color:#000;transform:scaleX(0.9494);">20</div>
<div class="t" style="left:903.00px;top:707.27px;font-size:22.30px;font-weight:normal;font-style:normal;color:#000;transform:scaleX(0.9494);">30</div>
<div class="t" style="left:903.00px;top:654.35px;font-size:22.30px;font-weight:normal;font-style:normal;color:#000;transform:scaleX(0.9494);">40</div>
<div class="t" style="left:903.00px;top:601.43px;font-size:22.30px;font-weight:normal;font-style:normal;color:#000;transform:scaleX(0.9494);">50</div>
<div class="t" style="left:903.00px;top:548.52px;font-size:22.30px;font-weight:normal;font-style:normal;color:#000;transform:scaleX(0.9494);">60</div>
<div class="t" style="left:965.26px;top:889.42px;font-size:22.30px;font-weight:normal;font-style:normal;color:#000;">Ctrl</div>
<div class="t" style="left:1040.37px;top:889.42px;font-size:22.30px;font-weight:normal;font-style:normal;color:#000;">Exp</div>
<div class="t" style="left:1006.84px;top:924.42px;font-size:22.30px;font-weight:normal;font-style:normal;color:#000;">V1</div>
<div class="t" style="left:1117.56px;top:889.42px;font-size:22.30px;font-weight:normal;font-style:normal;color:#000;">Ctrl</div>
<div class="t" style="left:1192.67px;top:889.42px;font-size:22.30px;font-weight:normal;font-style:normal;color:#000;">Exp</div>
<div class="t" style="left:1159.14px;top:924.42px;font-size:22.30px;font-weight:normal;font-style:normal;color:#000;">V2</div>
<div class="t" style="left:1269.86px;top:889.42px;font-size:22.30px;font-weight:normal;font-style:normal;color:#000;">Ctrl</div>
<div class="t" style="left:1344.97px;top:889.42px;font-size:22.30px;font-weight:normal;font-style:normal;color:#000;">Exp</div>
<div class="t" style="left:1311.44px;top:924.42px;font-size:22.30px;font-weight:normal;font-style:normal;color:#000;">V3</div>
<div class="t" style="left:1422.16px;top:889.42px;font-size:22.30px;font-weight:normal;font-style:normal;color:#000;">Ctrl</div>
<div class="t" style="left:1497.27px;top:889.42px;font-size:22.30px;font-weight:normal;font-style:normal;color:#000;">Exp</div>
<div class="t" style="left:1463.74px;top:924.42px;font-size:22.30px;font-weight:normal;font-style:normal;color:#000;">V4</div>
<div class="t" style="left:1574.46px;top:889.42px;font-size:22.30px;font-weight:normal;font-style:normal;color:#000;">Ctrl</div>
<div class="t" style="left:1649.57px;top:889.42px;font-size:22.30px;font-weight:normal;font-style:normal;color:#000;">Exp</div>
<div class="t" style="left:1616.04px;top:924.42px;font-size:22.30px;font-weight:normal;font-style:normal;color:#000;">V5</div>
<div class="t" style="left:857.3px;top:712.7px;font-size:26.4px;font-weight:bold;transform:translate(-50%,-50%) rotate(-90deg);transform-origin:50% 50%;">Label axis</div>
<svg class="r" style="left:0;top:0" width="1920" height="1920" fill="none"><path d="M643.5 1575 V1834" stroke="#d9d9d9" stroke-width="1.5"/><path d="M872.0 1575 V1834" stroke="#d9d9d9" stroke-width="1.5"/><path d="M1100.5 1575 V1834" stroke="#d9d9d9" stroke-width="1.5"/><path d="M1329.0 1575 V1834" stroke="#d9d9d9" stroke-width="1.5"/><rect x="415.0" y="1589" width="45.7" height="57.5" fill="#707070"/><rect x="460.7" y="1589" width="182.8" height="57.5" fill="#a5a5a5"/><rect x="643.5" y="1589" width="68.6" height="57.5" fill="#d9d9d9"/><rect x="415.0" y="1676" width="137.1" height="57.5" fill="#707070"/><rect x="552.1" y="1676" width="182.8" height="57.5" fill="#a5a5a5"/><rect x="734.9" y="1676" width="45.7" height="57.5" fill="#d9d9d9"/><rect x="415.0" y="1762.5" width="457.0" height="57.5" fill="#707070"/><rect x="872.0" y="1762.5" width="228.5" height="57.5" fill="#a5a5a5"/><rect x="1100.5" y="1762.5" width="182.8" height="57.5" fill="#d9d9d9"/><path d="M415 1575 V1834" stroke="#000" stroke-width="2"/><rect x="796" y="1895.5" width="10" height="10" fill="#707070"/><rect x="853" y="1895.5" width="10" height="10" fill="#a5a5a5"/><rect x="910" y="1895.5" width="10" height="10" fill="#d9d9d9"/></svg>
<div class="t" style="left:384.07px;top:1603.91px;font-size:23.30px;font-weight:normal;font-style:normal;color:#000;">3</div>
<div class="t" style="left:384.07px;top:1690.91px;font-size:23.30px;font-weight:normal;font-style:normal;color:#000;">2</div>
<div class="t" style="left:384.07px;top:1777.41px;font-size:23.30px;font-weight:normal;font-style:normal;color:#000;">1</div>
<div class="t" style="left:408.56px;top:1844.00px;font-size:23.20px;font-weight:normal;font-style:normal;color:#000;">0</div>
<div class="t" style="left:630.62px;top:1844.00px;font-size:23.20px;font-weight:normal;font-style:normal;color:#000;">50</div>
<div class="t" style="left:852.63px;top:1844.00px;font-size:23.20px;font-weight:normal;font-style:normal;color:#000;">100</div>
<div class="t" style="left:1081.13px;top:1844.00px;font-size:23.20px;font-weight:normal;font-style:normal;color:#000;">150</div>
<div class="t" style="left:1309.63px;top:1844.00px;font-size:23.20px;font-weight:normal;font-style:normal;color:#000;">200</div>
<div class="t" style="left:810.70px;top:1884.82px;font-size:23.40px;font-weight:normal;font-style:normal;color:#000;">V1</div>
<div class="t" style="left:868.40px;top:1884.82px;font-size:23.40px;font-weight:normal;font-style:normal;color:#000;">V2</div>
<div class="t" style="left:925.30px;top:1884.82px;font-size:23.40px;font-weight:normal;font-style:normal;color:#000;">V3</div>
<div class="t" style="left:338px;top:1704px;font-size:27.3px;font-weight:bold;transform:translate(-50%,-50%) rotate(-90deg);transform-origin:50% 50%;">Label axis</div>
</body></html>
